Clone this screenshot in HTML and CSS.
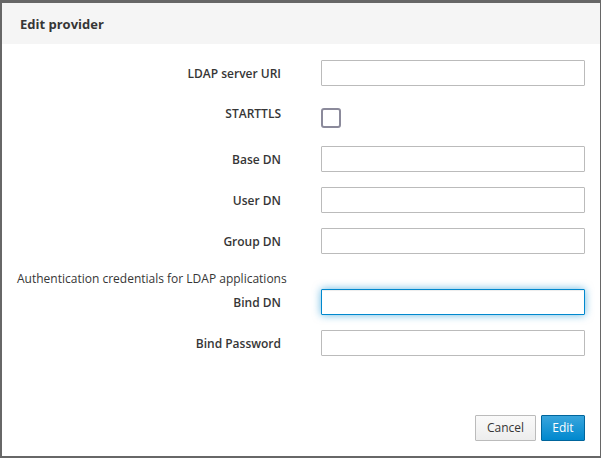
FILE: index.html
```html
<!DOCTYPE html>
<html>
<head>
<meta charset="utf-8">
<link rel="stylesheet" href="styles.css">
</head>
<body>
<div class="modal">
  <div class="modal-header">
    <h4 class="modal-title">Edit provider</h4>
  </div>
  <form class="modal-body">
    <div class="row">
      <label class="label">LDAP server URI</label>
      <input class="input" type="text">
    </div>
    <div class="row row-check">
      <label class="label label-check">STARTTLS</label>
      <input class="check" type="checkbox">
    </div>
    <div class="row">
      <label class="label">Base DN</label>
      <input class="input" type="text">
    </div>
    <div class="row">
      <label class="label">User DN</label>
      <input class="input" type="text">
    </div>
    <div class="row">
      <label class="label">Group DN</label>
      <input class="input" type="text">
    </div>
    <div class="section">Authentication credentials for LDAP applications</div>
    <div class="row">
      <label class="label">Bind DN</label>
      <input class="input input-focus" type="text">
    </div>
    <div class="row">
      <label class="label">Bind Password</label>
      <input class="input" type="password">
    </div>
  </form>
  <div class="modal-footer">
    <button class="btn btn-default" type="button">Cancel</button>
    <button class="btn btn-primary" type="button">Edit</button>
  </div>
</div>
</body>
</html>
```

FILE: styles.css
```css
html, body {
  margin: 0;
  padding: 0;
}

body {
  background: #676767;
  font-family: "Open Sans", "Liberation Sans", sans-serif;
  font-size: 12px;
  color: #363636;
  height: 458px;
  overflow: hidden;
}

.modal {
  margin: 3px 1px 0 2px;
  height: 453px;
  background: #fff;
  display: flex;
  flex-direction: column;
}

.modal-header {
  height: 41px;
  background: #f5f5f5;
  display: flex;
  align-items: center;
  padding: 0 18px;
}

.modal-title {
  margin: 0;
  font-size: 13px;
  font-weight: 700;
  color: #363636;
}

.modal-body {
  margin: 0;
  padding: 16px 0 0 0;
  display: flex;
  flex-direction: column;
}

.row {
  display: flex;
  align-items: center;
  margin-bottom: 15px;
}

.label {
  width: 279px;
  text-align: right;
  font-weight: 600;
  line-height: 17px;
  flex: none;
}

.input {
  box-sizing: border-box;
  margin: 0 0 0 40px;
  width: 264px;
  height: 26px;
  border: 1px solid #bbb;
  border-radius: 1px;
  background: #fff;
  padding: 2px 6px;
  font: inherit;
  outline: none;
}

.input-focus {
  border-color: #0088ce;
  box-shadow: inset 0 1px 1px rgba(3, 3, 3, 0.075), 0 0 8px rgba(0, 136, 206, 0.6);
}

.row-check {
  align-items: flex-start;
  height: 30px;
}

.label-check {
  padding-top: 4px;
}

.check {
  appearance: none;
  -webkit-appearance: none;
  box-sizing: border-box;
  width: 20px;
  height: 20px;
  margin: 7px 0 0 40px;
  border: 2px solid #8b8a9b;
  border-radius: 3px;
  background: #fff;
}

.section {
  padding-left: 15px;
  line-height: 20px;
  height: 20px;
}

.modal-footer {
  margin-top: auto;
  display: flex;
  justify-content: flex-end;
  gap: 5px;
  padding: 0 15px 15px 0;
}

.btn {
  box-sizing: border-box;
  height: 26px;
  font: inherit;
  font-size: 12px;
  border-radius: 1px;
  padding: 0 10px;
  line-height: 24px;
}

.btn-default {
  width: 61px;
  color: #363636;
  background: linear-gradient(#fafafa, #ededed);
  border: 1px solid #bbb;
}

.btn-primary {
  width: 44px;
  color: #fff;
  background: linear-gradient(#39a5dc, #0088ce);
  border: 1px solid #00659c;
}
```
